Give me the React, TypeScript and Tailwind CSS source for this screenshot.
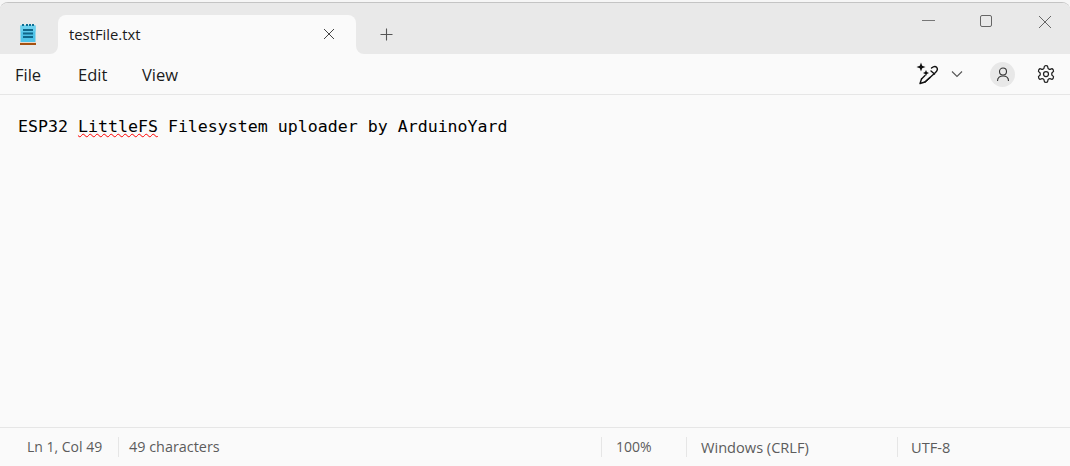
import React from "react";

const ui = { fontFamily: '"Open Sans", "Noto Sans", sans-serif' };

function NotepadIcon() {
  return (
    <svg width="16" height="21" viewBox="0 0 16 21" className="block">
      <rect x="0.5" y="1.5" width="15" height="16.5" fill="#4fc3e8" />
      <rect x="0.5" y="1.5" width="15" height="6" fill="#6cd0ee" />
      <rect x="2" y="0" width="2" height="2" fill="#0e6f93" />
      <rect x="6" y="0" width="2" height="2" fill="#0e6f93" />
      <rect x="9" y="0" width="2" height="2" fill="#0e6f93" />
      <rect x="12" y="0" width="2" height="2" fill="#0e6f93" />
      <rect x="3" y="5" width="10" height="2" fill="#10678a" />
      <rect x="3" y="8.5" width="10" height="2" fill="#10678a" />
      <rect x="3" y="12" width="10" height="2" fill="#10678a" />
      <rect x="0" y="18" width="16" height="1" fill="#e8d8c8" />
      <rect x="0" y="19" width="16" height="2" fill="#a5500f" />
    </svg>
  );
}

function TabCorner({ side }: { side: "left" | "right" }) {
  return (
    <svg width="8" height="8" viewBox="0 0 8 8" className={side === "left" ? "absolute bottom-0 -left-2" : "absolute bottom-0 -right-2"}>
      <path d={side === "left" ? "M8 0 A8 8 0 0 1 0 8 H8 Z" : "M0 0 A8 8 0 0 0 8 8 H0 Z"} fill="#fafafa" />
    </svg>
  );
}

function PenSparkle() {
  return (
    <svg width="24" height="24" viewBox="0 0 24 24" fill="none" stroke="#111" className="block">
      <path d="M5 0.5 L6.2 3.8 L9.5 5 L6.2 6.2 L5 9.5 L3.8 6.2 L0.5 5 L3.8 3.8 Z" fill="#111" stroke="none" />
      <path d="M10 8 L10.9 10.1 L13 11 L10.9 11.9 L10 14 L9.1 11.9 L7 11 L9.1 10.1 Z" fill="#111" stroke="none" />
      <path d="M4 21.5 L5.5 17 M4 21.5 L9 20 L19.5 10.5 C21.5 8.5 21.8 6.5 20.6 5.2 C19.4 4 17.4 4.4 15.5 6" strokeWidth="1.4" strokeLinejoin="round" strokeLinecap="round" />
      <path d="M5.5 17 L9 13.5 M9 20 L14 15.5 M15 9 L18.5 12" strokeWidth="1.4" strokeLinecap="round" />
    </svg>
  );
}

function Sep() {
  return <div className="h-5 w-px bg-[#e6e6e6]" />;
}

export default function App() {
  return (
    <div className="h-[466px] w-[1070px] overflow-hidden bg-[#f6f6f6] pt-[2px]" style={ui}>
      <div className="flex h-[464px] flex-col overflow-hidden rounded-tl-lg rounded-tr-lg border-t border-[#c4c4c4] bg-[#fafafa]">
        <div className="flex h-[51px] shrink-0 items-end bg-[#e9e9e9]">
          <div className="flex h-[39px] w-[58px] items-start justify-center pt-[9px]">
            <div className="mr-[2px]"><NotepadIcon /></div>
          </div>
          <div className="relative flex h-[39px] w-[298px] items-center justify-between rounded-t-lg bg-[#fafafa] pl-[11px] pr-[21px]">
            <TabCorner side="left" />
            <TabCorner side="right" />
            <span className="text-[14.8px] text-[#1b1b1b]">testFile.txt</span>
            <svg width="12" height="12" viewBox="0 0 12 12" stroke="#444" strokeWidth="1" className="mb-[1px]">
              <path d="M1 1 L11 11 M11 1 L1 11" />
            </svg>
          </div>
          <div className="flex h-[39px] w-[60px] items-center justify-center">
            <svg width="13" height="13" viewBox="0 0 13 13" stroke="#555" strokeWidth="1.1">
              <path d="M6.5 0.5 V12.5 M0.5 6.5 H12.5" />
            </svg>
          </div>
          <div className="flex-1" />
          <div className="flex h-full items-start pt-[12px]">
            <div className="flex w-[58px] justify-center pl-[10px]">
              <div className="mt-[5px] h-px w-[13px] bg-[#777]" />
            </div>
            <div className="flex w-[58px] justify-center pl-[9px]">
              <div className="h-[12px] w-[12px] rounded-[2px] border border-[#666]" />
            </div>
            <div className="flex w-[60px] justify-center pl-[9px]">
              <svg width="14" height="14" viewBox="0 0 14 14" stroke="#666" strokeWidth="1">
                <path d="M1 1 L13 13 M13 1 L1 13" />
              </svg>
            </div>
          </div>
        </div>

        <div className="flex h-[41px] shrink-0 items-center border-b border-[#e6e6e6] bg-[#fafafa] pl-[15px] pr-[14px] text-[16.5px] text-[#1b1b1b]">
          <span className="mt-[3px] w-[63px]">File</span>
          <span className="mt-[3px] w-[64px]">Edit</span>
          <span className="mt-[3px]">View</span>
          <div className="flex-1" />
          <PenSparkle />
          <svg width="12" height="12" viewBox="0 0 12 12" fill="none" stroke="#555" strokeWidth="1.1" className="ml-[11px]">
            <path d="M1 3.5 L6 8.5 L11 3.5" />
          </svg>
          <div className="ml-[27px] flex h-[25px] w-[25px] items-center justify-center rounded-full bg-[#e8e8e8]">
            <svg width="14" height="15" viewBox="0 0 14 15" fill="none" stroke="#333" strokeWidth="1.1">
              <circle cx="7" cy="4.5" r="3.5" />
              <path d="M1.5 14 C1.5 10.5 4 9 7 9 C10 9 12.5 10.5 12.5 14" />
            </svg>
          </div>
          <svg width="20" height="20" viewBox="0 0 24 24" fill="none" stroke="#222" strokeWidth="1.5" strokeLinecap="round" strokeLinejoin="round" className="ml-[21px]">
            <path d="M12.22 2h-.44a2 2 0 0 0-2 2v.18a2 2 0 0 1-1 1.73l-.43.25a2 2 0 0 1-2 0l-.15-.08a2 2 0 0 0-2.73.73l-.22.38a2 2 0 0 0 .73 2.73l.15.1a2 2 0 0 1 1 1.72v.51a2 2 0 0 1-1 1.74l-.15.09a2 2 0 0 0-.73 2.73l.22.38a2 2 0 0 0 2.73.73l.15-.08a2 2 0 0 1 2 0l.43.25a2 2 0 0 1 1 1.73V20a2 2 0 0 0 2 2h.44a2 2 0 0 0 2-2v-.18a2 2 0 0 1 1-1.73l.43-.25a2 2 0 0 1 2 0l.15.08a2 2 0 0 0 2.73-.73l.22-.39a2 2 0 0 0-.73-2.73l-.15-.08a2 2 0 0 1-1-1.74v-.5a2 2 0 0 1 1-1.74l.15-.09a2 2 0 0 0 .73-2.73l-.22-.38a2 2 0 0 0-2.73-.73l-.15.08a2 2 0 0 1-2 0l-.43-.25a2 2 0 0 1-1-1.73V4a2 2 0 0 0-2-2z" />
            <circle cx="12" cy="12" r="3" />
          </svg>
        </div>

        <div
          className="flex-1 pl-[18px] pt-[21px] text-[16.6px] leading-[22px] text-black"
          style={{ fontFamily: '"DejaVu Sans Mono", monospace' }}
        >
          ESP32{" "}
          <span className="underline decoration-[#ff0000] decoration-wavy decoration-1 underline-offset-1">LittleFS</span>{" "}
          Filesystem uploader by ArduinoYard
        </div>

        <div className="flex h-[39px] shrink-0 items-center border-t border-[#e6e6e6] text-[#5c5c5c]">
          <div className="w-[118px] pl-[27px] text-[14px] leading-5">Ln 1, Col 49</div>
          <Sep />
          <div className="w-[482px] pl-[10px] text-[14.4px] leading-5">49 characters</div>
          <Sep />
          <div className="w-[84px] pl-[14px] text-[14px] leading-5">100%</div>
          <Sep />
          <div className="w-[210px] pl-[14px] text-[14.6px] leading-5">Windows (CRLF)</div>
          <Sep />
          <div className="pl-[13px] text-[14.6px] leading-5">UTF-8</div>
        </div>
      </div>
    </div>
  );
}
